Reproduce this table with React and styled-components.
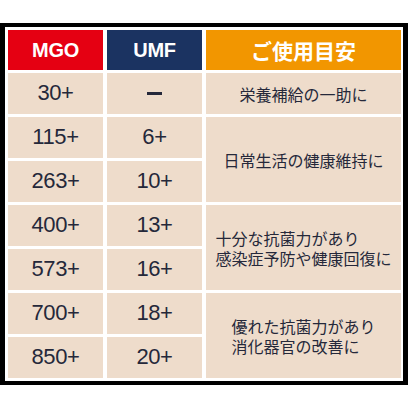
import { Fragment } from "react"
import { styled, createGlobalStyle } from "styled-components"

const Global = createGlobalStyle`
  html, body {
    margin: 0;
    padding: 0;
    background: #ffffff;
  }
`

const Frame = styled.div`
  margin-top: 23px;
  width: 408px;
  box-sizing: border-box;
  border-style: solid;
  border-color: #000;
  border-width: 4px 5px;
  padding: 3px 2px 3px 3px;
  background: #fff;
`

const Table = styled.div`
  display: grid;
  grid-template-columns: 95px 95px 195px;
  grid-template-rows: 40px repeat(7, 41px);
  gap: 3px 4px;
`

const Head = styled.div`
  display: flex;
  align-items: center;
  justify-content: center;
  background: ${(p) => p.$bg};
  color: #fff;
  font-family: "Liberation Sans", "Noto Sans CJK JP", sans-serif;
  font-weight: 700;
  font-size: ${(p) => (p.$jp ? "21px" : "20px")};
  letter-spacing: ${(p) => (p.$jp ? "0" : "-0.3px")};
`

const Cell = styled.div`
  grid-column: ${(p) => p.$col};
  grid-row: ${(p) => p.$row};
  display: flex;
  align-items: center;
  justify-content: center;
  background: #eedccb;
  color: #25283a;
  font-family: "Liberation Sans", sans-serif;
  font-size: 22px;
  letter-spacing: -0.4px;
  padding-bottom: 1px;
`

const Dash = styled.span`
  display: block;
  width: 15px;
  height: 3px;
  background: #25283a;
`

const Note = styled.div`
  grid-column: 3;
  grid-row: ${(p) => p.$row};
  display: flex;
  align-items: center;
  justify-content: center;
  background: #eedccb;
  color: #25283a;
  font-family: "Noto Sans CJK JP", sans-serif;
  font-size: 16px;
  line-height: 20px;
`

const Lines = styled.p`
  margin: 0;
  text-align: left;
  white-space: nowrap;
`

const rows = [
  ["30+", null],
  ["115+", "6+"],
  ["263+", "10+"],
  ["400+", "13+"],
  ["573+", "16+"],
  ["700+", "18+"],
  ["850+", "20+"],
]

const notes = [
  { row: "2", lines: ["栄養補給の一助に"] },
  { row: "3 / span 2", lines: ["日常生活の健康維持に"] },
  { row: "5 / span 2", lines: ["十分な抗菌力があり", "感染症予防や健康回復に"] },
  { row: "7 / span 2", lines: ["優れた抗菌力があり", "消化器官の改善に"] },
]

export default function App() {
  return (
    <>
      <Global />
      <Frame>
        <Table>
          <Head $bg="#e50012">MGO</Head>
          <Head $bg="#1b3361">UMF</Head>
          <Head $bg="#f29600" $jp>ご使用目安</Head>
          {rows.map(([mgo, umf], i) => (
            <Fragment key={mgo}>
              <Cell $col={1} $row={i + 2}>{mgo}</Cell>
              <Cell $col={2} $row={i + 2}>{umf ?? <Dash />}</Cell>
            </Fragment>
          ))}
          {notes.map((n) => (
            <Note key={n.row} $row={n.row}>
              <Lines>
                {n.lines.map((l, j) => (
                  <Fragment key={j}>
                    {l}
                    {j < n.lines.length - 1 && <br />}
                  </Fragment>
                ))}
              </Lines>
            </Note>
          ))}
        </Table>
      </Frame>
    </>
  )
}
